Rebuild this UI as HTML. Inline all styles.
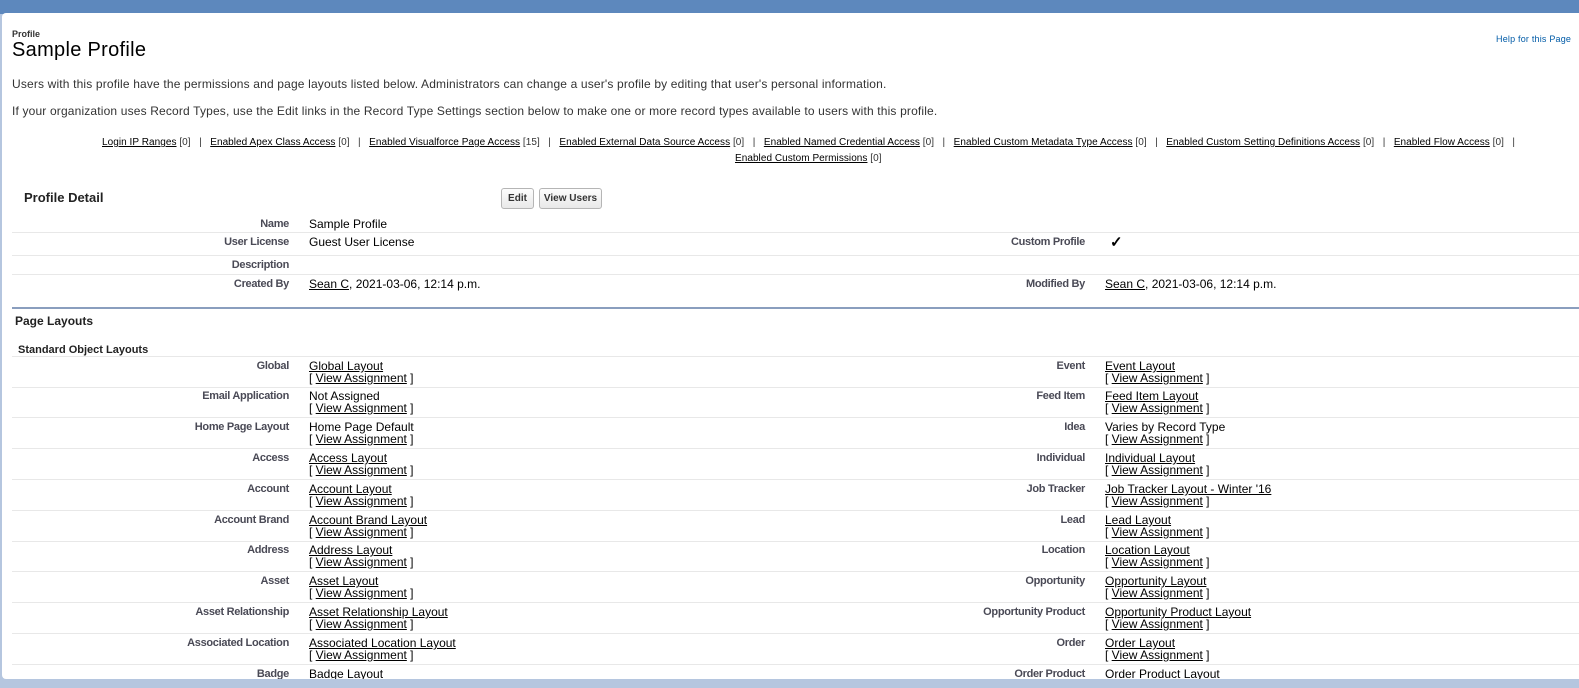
<!DOCTYPE html>
<html><head><meta charset="utf-8"><style>
*{margin:0;padding:0;box-sizing:border-box}
html,body{width:1579px;height:688px;overflow:hidden}
body{background:#b5c6df;font-family:"Liberation Sans",Arial,sans-serif;color:#000;position:relative}
.wrap{position:absolute;left:0;top:0;width:1579px;height:688px;overflow:hidden}
.top{position:absolute;left:0;top:0;width:1579px;height:14px;background:#5d88bd}
.page{position:absolute;left:2px;top:13px;width:1577px;height:666px;background:#fff;border-radius:4px 0 0 4px;overflow:hidden}
.a{position:absolute;white-space:nowrap}
.lbl{position:absolute;font-size:11px;font-weight:bold;color:#4a4a56;text-align:right;white-space:nowrap;letter-spacing:-0.3px}
.v{position:absolute;font-size:12px;color:#000;white-space:nowrap;line-height:12px}
u{text-decoration:underline}
.ln{position:absolute;height:1px;background:#e8e8e8}
.links{font-size:10px;color:#333;letter-spacing:0.05px}
.links u{color:#000}
.p{font-size:12px;color:#333;letter-spacing:0.16px}
.btn{position:absolute;top:188px;height:21px;border:1px solid #b5b5b5;border-radius:3px;background:linear-gradient(#fdfdfd,#e8e8e8);font-size:10px;font-weight:bold;color:#333;line-height:19px;text-align:center}
</style></head><body><div class="wrap">
<div class="top"></div>
<div class="page"></div>
<div class="a" style="left:12px;top:29px;font-size:9px;font-weight:bold;color:#333">Profile</div>
<div class="a" style="left:12px;top:39px;font-size:20px;color:#000;letter-spacing:0.3px">Sample Profile</div>
<div class="a" style="left:1496px;top:34px;width:83px;overflow:hidden;font-size:9px;color:#015ba7;letter-spacing:0.2px">Help for this Page</div>
<div class="a p" style="left:12px;top:77px">Users with this profile have the permissions and page layouts listed below. Administrators can change a user's profile by editing that user's personal information.</div>
<div class="a p" style="left:12px;top:104px">If your organization uses Record Types, use the Edit links in the Record Type Settings section below to make one or more record types available to users with this profile.</div>
<div class="a links" style="left:102px;top:137px"><u>Login IP Ranges</u> [0] &nbsp; | &nbsp; <u>Enabled Apex Class Access</u> [0] &nbsp; | &nbsp; <u>Enabled Visualforce Page Access</u> [15] &nbsp; | &nbsp; <u>Enabled External Data Source Access</u> [0] &nbsp; | &nbsp; <u>Enabled Named Credential Access</u> [0] &nbsp; | &nbsp; <u>Enabled Custom Metadata Type Access</u> [0] &nbsp; | &nbsp; <u>Enabled Custom Setting Definitions Access</u> [0] &nbsp; | &nbsp; <u>Enabled Flow Access</u> [0] &nbsp; |</div>
<div class="a links" style="left:735px;top:153px"><u>Enabled Custom Permissions</u> [0]</div>
<div class="a" style="left:24px;top:190px;font-size:13px;font-weight:bold;color:#222">Profile Detail</div>
<div class="btn" style="left:501px;width:33px">Edit</div>
<div class="btn" style="left:539px;width:63px">View Users</div>

<div class="lbl" style="right:1290px;top:218px">Name</div><div class="v" style="left:309px;top:218px">Sample Profile</div>
<div class="ln" style="left:12px;top:232px;width:1567px"></div>
<div class="lbl" style="right:1290px;top:236px">User License</div><div class="v" style="left:309px;top:236px">Guest User License</div>
<div class="lbl" style="right:494px;top:236px">Custom Profile</div><div class="a" style="left:1110px;top:233px;font-size:15px;font-weight:bold">✓</div>
<div class="ln" style="left:12px;top:255px;width:1567px"></div>
<div class="lbl" style="right:1290px;top:259px">Description</div>
<div class="ln" style="left:12px;top:274px;width:1567px"></div>
<div class="lbl" style="right:1290px;top:278px">Created By</div><div class="v" style="left:309px;top:278px"><u>Sean C</u>, 2021-03-06, 12:14 p.m.</div>
<div class="lbl" style="right:494px;top:278px">Modified By</div><div class="v" style="left:1105px;top:278px"><u>Sean C</u>, 2021-03-06, 12:14 p.m.</div>
<div class="a" style="left:12px;top:307px;width:1567px;height:2px;background:#8a9ebe"></div>
<div class="a" style="left:15px;top:314px;font-size:12px;font-weight:bold;color:#222">Page Layouts</div>
<div class="a" style="left:18px;top:344px;font-size:11px;font-weight:bold;color:#222">Standard Object Layouts</div>

<div class="lbl" style="right:1290px;top:360px">Global</div><div class="v" style="left:309px;top:360px"><u>Global Layout</u><br>[ <u>View Assignment</u> ]</div>
<div class="lbl" style="right:494px;top:360px">Event</div><div class="v" style="left:1105px;top:360px"><u>Event Layout</u><br>[ <u>View Assignment</u> ]</div>
<div class="ln" style="left:12px;top:356px;width:1567px"></div>
<div class="ln" style="left:12px;top:387px;width:1567px"></div>
<div class="lbl" style="right:1290px;top:390px">Email Application</div><div class="v" style="left:309px;top:390px">Not Assigned<br>[ <u>View Assignment</u> ]</div>
<div class="lbl" style="right:494px;top:390px">Feed Item</div><div class="v" style="left:1105px;top:390px"><u>Feed Item Layout</u><br>[ <u>View Assignment</u> ]</div>
<div class="ln" style="left:12px;top:417px;width:1567px"></div>
<div class="lbl" style="right:1290px;top:421px">Home Page Layout</div><div class="v" style="left:309px;top:421px">Home Page Default<br>[ <u>View Assignment</u> ]</div>
<div class="lbl" style="right:494px;top:421px">Idea</div><div class="v" style="left:1105px;top:421px">Varies by Record Type<br>[ <u>View Assignment</u> ]</div>
<div class="ln" style="left:12px;top:448px;width:1567px"></div>
<div class="lbl" style="right:1290px;top:452px">Access</div><div class="v" style="left:309px;top:452px"><u>Access Layout</u><br>[ <u>View Assignment</u> ]</div>
<div class="lbl" style="right:494px;top:452px">Individual</div><div class="v" style="left:1105px;top:452px"><u>Individual Layout</u><br>[ <u>View Assignment</u> ]</div>
<div class="ln" style="left:12px;top:479px;width:1567px"></div>
<div class="lbl" style="right:1290px;top:483px">Account</div><div class="v" style="left:309px;top:483px"><u>Account Layout</u><br>[ <u>View Assignment</u> ]</div>
<div class="lbl" style="right:494px;top:483px">Job Tracker</div><div class="v" style="left:1105px;top:483px"><u>Job Tracker Layout - Winter '16</u><br>[ <u>View Assignment</u> ]</div>
<div class="ln" style="left:12px;top:510px;width:1567px"></div>
<div class="lbl" style="right:1290px;top:514px">Account Brand</div><div class="v" style="left:309px;top:514px"><u>Account Brand Layout</u><br>[ <u>View Assignment</u> ]</div>
<div class="lbl" style="right:494px;top:514px">Lead</div><div class="v" style="left:1105px;top:514px"><u>Lead Layout</u><br>[ <u>View Assignment</u> ]</div>
<div class="ln" style="left:12px;top:541px;width:1567px"></div>
<div class="lbl" style="right:1290px;top:544px">Address</div><div class="v" style="left:309px;top:544px"><u>Address Layout</u><br>[ <u>View Assignment</u> ]</div>
<div class="lbl" style="right:494px;top:544px">Location</div><div class="v" style="left:1105px;top:544px"><u>Location Layout</u><br>[ <u>View Assignment</u> ]</div>
<div class="ln" style="left:12px;top:571px;width:1567px"></div>
<div class="lbl" style="right:1290px;top:575px">Asset</div><div class="v" style="left:309px;top:575px"><u>Asset Layout</u><br>[ <u>View Assignment</u> ]</div>
<div class="lbl" style="right:494px;top:575px">Opportunity</div><div class="v" style="left:1105px;top:575px"><u>Opportunity Layout</u><br>[ <u>View Assignment</u> ]</div>
<div class="ln" style="left:12px;top:602px;width:1567px"></div>
<div class="lbl" style="right:1290px;top:606px">Asset Relationship</div><div class="v" style="left:309px;top:606px"><u>Asset Relationship Layout</u><br>[ <u>View Assignment</u> ]</div>
<div class="lbl" style="right:494px;top:606px">Opportunity Product</div><div class="v" style="left:1105px;top:606px"><u>Opportunity Product Layout</u><br>[ <u>View Assignment</u> ]</div>
<div class="ln" style="left:12px;top:633px;width:1567px"></div>
<div class="lbl" style="right:1290px;top:637px">Associated Location</div><div class="v" style="left:309px;top:637px"><u>Associated Location Layout</u><br>[ <u>View Assignment</u> ]</div>
<div class="lbl" style="right:494px;top:637px">Order</div><div class="v" style="left:1105px;top:637px"><u>Order Layout</u><br>[ <u>View Assignment</u> ]</div>
<div class="ln" style="left:12px;top:664px;width:1567px"></div>
<div class="lbl" style="right:1290px;top:668px">Badge</div><div class="v" style="left:309px;top:668px">Badge Layout</div>
<div class="lbl" style="right:494px;top:668px">Order Product</div><div class="v" style="left:1105px;top:668px">Order Product Layout</div>
<div class="a" style="left:0;top:679px;width:1579px;height:9px;background:#b5c6df"></div>
</div></body></html>
